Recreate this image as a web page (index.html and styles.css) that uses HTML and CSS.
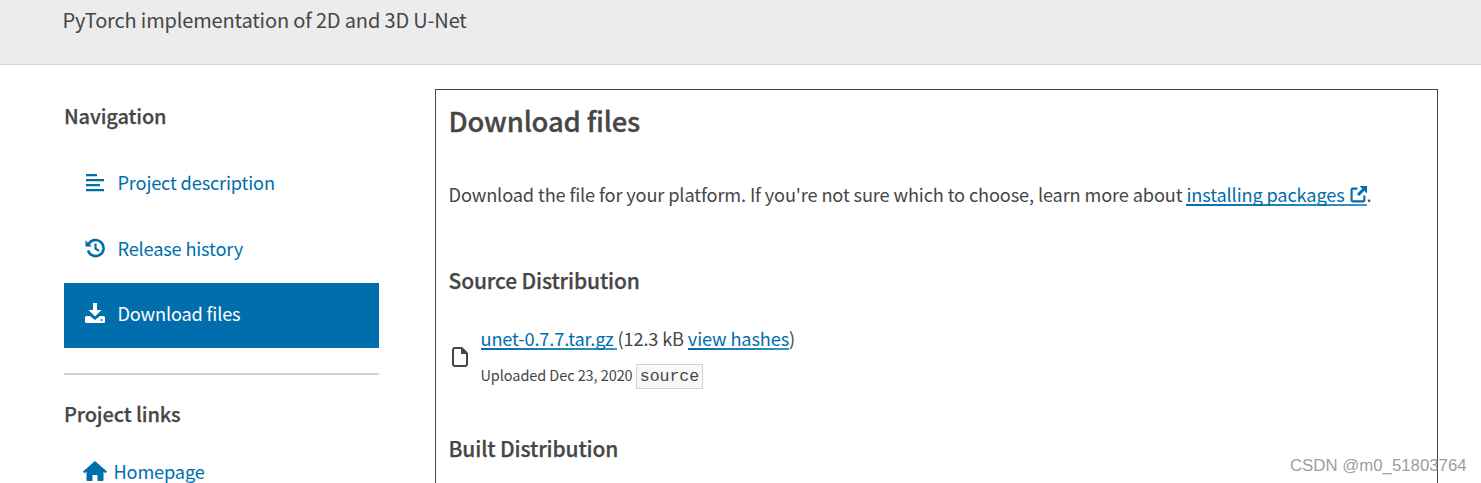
FILE: index.html
```html
<!DOCTYPE html>
<html lang="en">
<head>
<meta charset="utf-8">
<title>unet · PyPI</title>
<link rel="stylesheet" href="styles.css">
</head>
<body>
<header class="banner"><p class="summary">PyTorch implementation of 2D and 3D U-Net</p></header>
<div class="layout">
  <aside class="sidebar">
    <h3 class="side-title">Navigation</h3>
    <nav class="nav">
      <a class="nav-item" href="#"><svg class="nav-icon" viewBox="0 0 20 20"><path fill="currentColor" d="M1 2h11v2.200H1zM1 7h18v2.200H1zM1 12h14v2.200H1zM1 17h18v2.200H1z"/></svg>Project description</a>
      <a class="nav-item" href="#"><svg class="nav-icon" viewBox="0 0 20 20"><path fill="none" stroke="currentColor" stroke-width="2.600" d="M3.600 6.200A8 8 0 1 1 3 12.500"/><path fill="currentColor" d="M.5 2.500 7 8.500H.5z"/><path fill="none" stroke="currentColor" stroke-width="2.200" d="M10.500 5.500v5.200l3.600 2.200"/></svg>Release history</a>
      <a class="nav-item active" href="#"><svg class="nav-icon" viewBox="0 0 20 20"><path fill="currentColor" d="M8 0h4v7h4.500L10 13.500 3.500 7H8zM0 14.500a1.500 1.500 0 0 1 1.500-1.500H5l5 4 5-4h3.500a1.500 1.500 0 0 1 1.500 1.500V19a1 1 0 0 1-1 1H1a1 1 0 0 1-1-1z"/><circle cx="16.500" cy="17" r="1" fill="#006dad"/></svg>Download files</a>
    </nav>
    <hr class="rule">
    <h3 class="side-title">Project links</h3>
    <a class="link-item" href="#"><svg class="home-icon" viewBox="0 0 24 20"><path fill="currentColor" d="M12 0 24 10.500 22.500 12.300 20.500 10.700V19a1 1 0 0 1-1 1H14.500v-6h-5v6H4.500a1 1 0 0 1-1-1V10.700L1.500 12.300 0 10.500z"/></svg>Homepage</a>
  </aside>
  <main class="panel">
    <h2 class="panel-title">Download files</h2>
    <p class="intro">Download the file for your platform. If you're not sure which to choose, learn more about <a class="ul" href="#">installing packages<svg class="ext" viewBox="0 0 16 16"><path fill="none" stroke="currentColor" stroke-width="2" d="M7 2.500H2.500a1 1 0 0 0-1 1V13.500a1 1 0 0 0 1 1H12.500a1 1 0 0 0 1-1V9"/><path fill="currentColor" d="M9 0h7v7l-2.500-2.500-5 5-2-2 5-5z"/></svg></a>.</p>
    <h3 class="dist-title">Source Distribution</h3>
    <div class="file">
      <svg class="file-icon" viewBox="0 0 16 20"><path fill="none" stroke="currentColor" stroke-width="2" stroke-linejoin="round" d="M3 1h6.500L15 6.500V17a2 2 0 0 1-2 2H3a2 2 0 0 1-2-2V3a2 2 0 0 1 2-2z"/><path fill="currentColor" d="M9 1h2l4 4v2H9z"/></svg>
      <div class="file-body">
        <p class="file-line"><a class="ul" href="#">unet-0.7.7.tar.gz </a>(12.3 kB <a class="ul" href="#">view hashes</a>)</p>
        <p class="file-meta">Uploaded Dec 23, 2020 <code class="tag">source</code></p>
      </div>
    </div>
    <h3 class="dist-title built">Built Distribution</h3>
  </main>
</div>
<div class="watermark">CSDN @m0_51803764</div>
</body>
</html>
```
FILE: styles.css
```css
* { box-sizing: border-box; }
html, body { margin: 0; height: 483px; overflow: hidden; background: #fff; }
body { font-family: "Noto Sans CJK SC", "Noto Sans", sans-serif; color: #464646; font-size: 20px; position: relative; }
p, h2, h3 { margin: 0; }
a { color: #006dad; text-decoration: none; }

.banner { height: 65px; background: #ececec; border-bottom: 1px solid #d3d3d3; padding: 6px 0 0 62.500px; }
.summary { font-size: 20px; line-height: 28px; letter-spacing: -0.16px; }

.layout { display: flex; height: 418px; overflow: hidden; padding: 24px 0 0 64px; gap: 56px; }
.sidebar { width: 315px; flex: none; padding-top: 13px; }
.side-title { font-size: 20px; font-weight: 500; line-height: 28px; letter-spacing: -0.12px; -webkit-text-stroke: 0.25px currentColor; }
.nav { margin-top: 23px; }
.nav-item { display: flex; align-items: center; height: 65px; padding: 0 0 6px 20.500px; font-size: 18.200px; letter-spacing: -0.17px; }
.nav-item:first-child { padding-bottom: 8px; }
.nav-icon { width: 20px; height: 20px; margin-right: 13px; flex: none; }
.active { background: #006dad; color: #fff; }
.rule { border: 0; height: 2px; background: #d3d3d3; margin: 25px 0 25px; }
.link-item { display: flex; align-items: center; margin-top: 29px; padding-left: 18.500px; font-size: 18.200px; letter-spacing: -0.17px; line-height: 28px; }
.home-icon { width: 24px; height: 20px; margin-right: 7px; flex: none; }

.panel { width: 1003px; flex: none; border: 1px solid #464646; border-bottom: 0; padding: 10px 13px 0 12.500px; }
.panel-title { font-size: 27.500px; font-weight: 500; line-height: 40px; letter-spacing: -0.2px; -webkit-text-stroke: 0.3px currentColor; }
.intro { margin-top: 40px; font-size: 18.200px; line-height: 28px; letter-spacing: -0.135px; white-space: nowrap; }
.ul { background: linear-gradient(90deg, #006dad, #3f93c4) 0 calc(100% - 1px) / 100% 2px no-repeat; }
.ext { width: 17px; height: 17px; margin-left: 5px; vertical-align: -1px; }
.dist-title { margin-top: 58px; font-size: 21px; font-weight: 500; line-height: 28px; letter-spacing: -0.14px; -webkit-text-stroke: 0.25px currentColor; }
.file { display: flex; align-items: center; margin-top: 31px; }
.file-icon { width: 16px; height: 20px; margin: 0 12.500px 0 3.500px; flex: none; }
.file-line { font-size: 18.200px; line-height: 26px; letter-spacing: -0.14px; }
.file-meta { margin-top: 12px; font-size: 14.500px; line-height: 24px; letter-spacing: -0.08px; }
.tag { font-family: "Liberation Mono", monospace; font-size: 16.600px; background: #f8f8f8; border: 1px solid #d3d3d3; padding: 2px 3px; }
.dist-title.built { margin-top: 45px; }

.watermark { position: absolute; left: 1290px; top: 456px; font-family: "Liberation Sans", sans-serif; font-size: 16.800px; line-height: 20px; color: rgba(130,130,130,.8); }
```
